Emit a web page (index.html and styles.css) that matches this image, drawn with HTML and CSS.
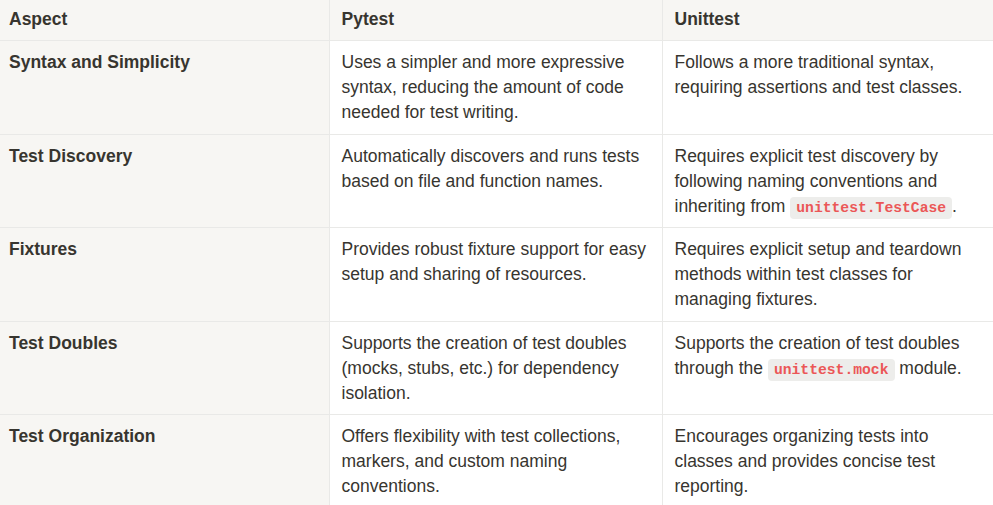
FILE: index.html
```html
<!DOCTYPE html>
<html>
<head>
<meta charset="utf-8">
<link rel="stylesheet" href="styles.css">
</head>
<body>
<table class="cmp">
  <colgroup>
    <col class="c1"><col class="c2"><col class="c3">
  </colgroup>
  <thead>
    <tr><th>Aspect</th><th>Pytest</th><th>Unittest</th></tr>
  </thead>
  <tbody>
    <tr>
      <td>Syntax and Simplicity</td>
      <td>Uses a simpler and more expressive syntax, reducing the amount of code needed for test writing.</td>
      <td>Follows a more traditional syntax, requiring assertions and test classes.</td>
    </tr>
    <tr>
      <td>Test Discovery</td>
      <td>Automatically discovers and runs tests based on file and function names.</td>
      <td>Requires explicit test discovery by following naming conventions and inheriting from <code>unittest.TestCase</code>.</td>
    </tr>
    <tr>
      <td>Fixtures</td>
      <td>Provides robust fixture support for easy setup and sharing of resources.</td>
      <td>Requires explicit setup and teardown methods within test classes for managing fixtures.</td>
    </tr>
    <tr>
      <td>Test Doubles</td>
      <td>Supports the creation of test doubles (mocks, stubs, etc.) for dependency isolation.</td>
      <td>Supports the creation of test doubles through the <code>unittest.mock</code> module.</td>
    </tr>
    <tr>
      <td>Test Organization</td>
      <td>Offers flexibility with test collections, markers, and custom naming conventions.</td>
      <td>Encourages organizing tests into classes and provides concise test reporting.</td>
    </tr>
  </tbody>
</table>
</body>
</html>
```
FILE: styles.css
```css
html, body {
  margin: 0;
  padding: 0;
  background: #ffffff;
}
body {
  font-family: "Liberation Sans", Arial, sans-serif;
  font-size: 17.5px;
  line-height: 25px;
  color: #37352f;
}
.cmp {
  width: 993px;
  border-collapse: collapse;
  table-layout: fixed;
}
.c1 { width: 329px; }
.c2 { width: 333px; }
.c3 { width: 331px; }
.cmp th, .cmp td {
  text-align: left;
  vertical-align: top;
  padding: 9px 12px 8.5px;
  border: 1px solid #e9e9e7;
}
.cmp th {
  font-weight: bold;
  background: #f7f6f3;
  padding: 7px 12px 8px;
}
.cmp td:first-child {
  font-weight: bold;
  background: #f7f6f3;
}
.cmp th:first-child, .cmp td:first-child {
  padding-left: 9px;
  border-left: none;
}
.cmp th:last-child, .cmp td:last-child {
  border-right: none;
}
.cmp thead tr:first-child th {
  border-top: none;
}
code {
  font-family: "Liberation Mono", "Courier New", monospace;
  font-weight: bold;
  font-size: 14.7px;
  line-height: 1;
  color: #eb5757;
  background: #ededeb;
  border-radius: 4px;
  padding: 3px 6px;
}
```
